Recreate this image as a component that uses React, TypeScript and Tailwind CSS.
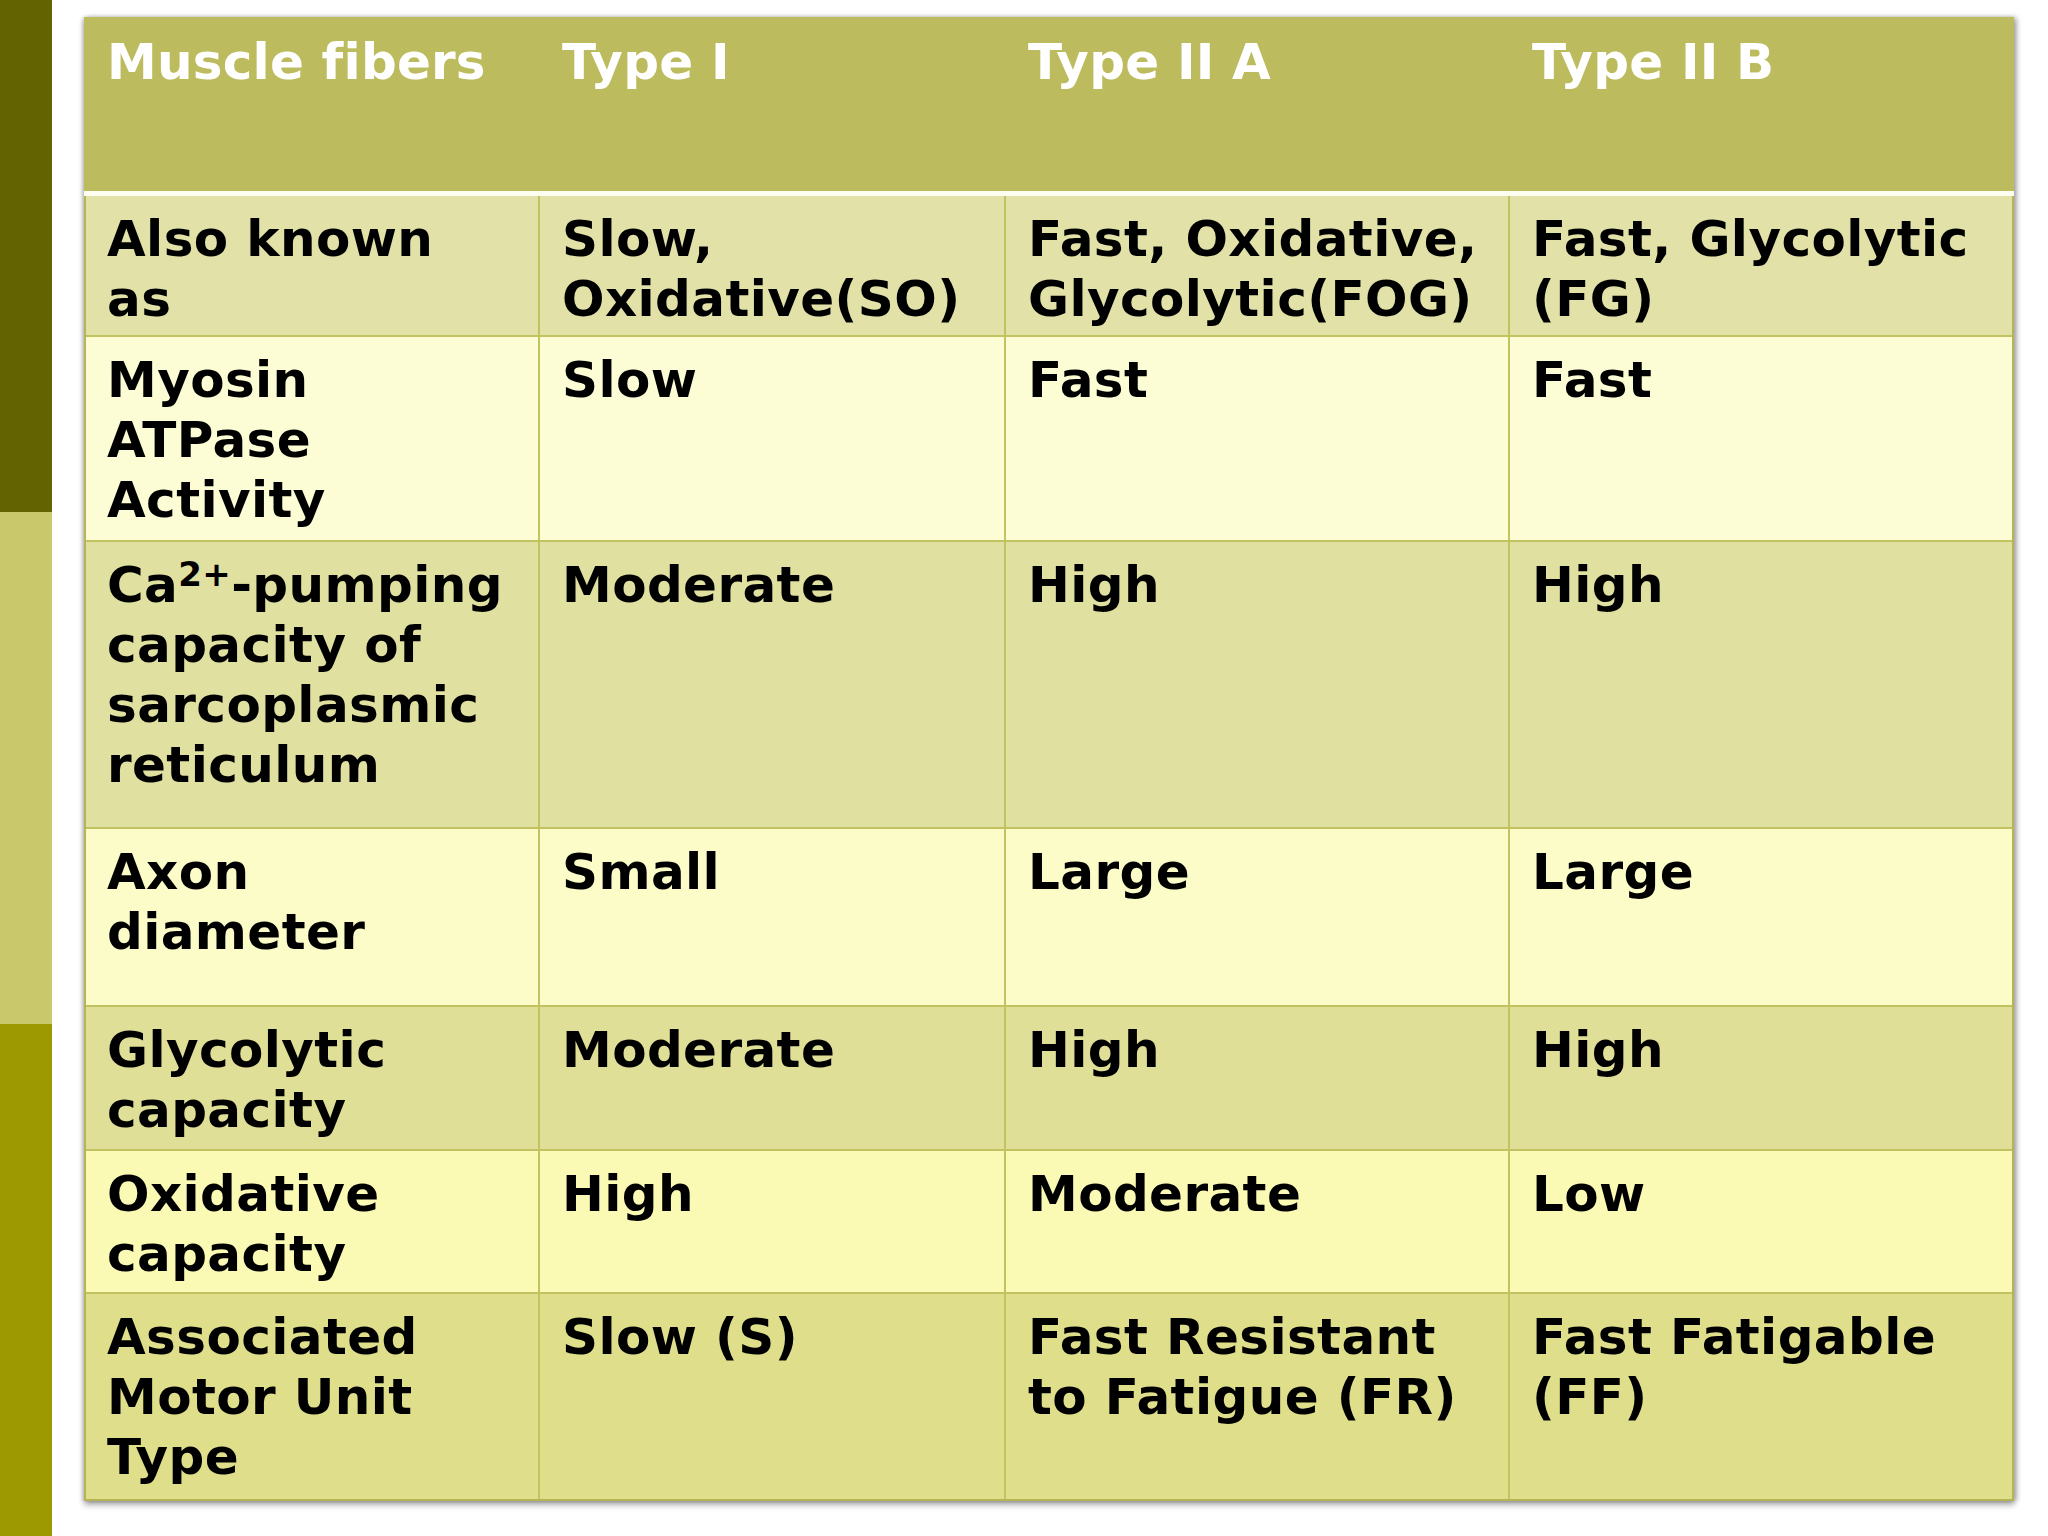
import React from 'react';

type Row = {
    height: string;
    bg: string;
    cells: React.ReactNode[];
};

const rows: Row[] = [
    {
        height: 'h-[141px]',
        bg: 'bg-[#e1e1a8]',
        cells: [
            <>Also known<br />as</>,
            <>Slow,<br />Oxidative(SO)</>,
            <>Fast, Oxidative,<br />Glycolytic(FOG)</>,
            <>Fast, Glycolytic<br />(FG)</>,
        ],
    },
    {
        height: 'h-[205px]',
        bg: 'bg-[#fdfdd5]',
        cells: [<>Myosin<br />ATPase<br />Activity</>, 'Slow', 'Fast', 'Fast'],
    },
    {
        height: 'h-[287px]',
        bg: 'bg-[#e0e0a0]',
        cells: [
            <>Ca<sup className="text-[34px] -top-[16px]">2+</sup>-pumping<br />capacity of<br />sarcoplasmic<br />reticulum</>,
            'Moderate',
            'High',
            'High',
        ],
    },
    {
        height: 'h-[178px]',
        bg: 'bg-[#fcfcc8]',
        cells: [<>Axon<br />diameter</>, 'Small', 'Large', 'Large'],
    },
    {
        height: 'h-[144px]',
        bg: 'bg-[#e0df97]',
        cells: [<>Glycolytic<br />capacity</>, 'Moderate', 'High', 'High'],
    },
    {
        height: 'h-[143px]',
        bg: 'bg-[#fafab5]',
        cells: [<>Oxidative<br />capacity</>, 'High', 'Moderate', 'Low'],
    },
    {
        height: 'h-[205px]',
        bg: 'bg-[#dfdf8b]',
        cells: [
            <>Associated<br />Motor Unit<br />Type</>,
            'Slow (S)',
            <>Fast Resistant<br />to Fatigue (FR)</>,
            <>Fast Fatigable<br />(FF)</>,
        ],
    },
];

const headers = ['Muscle fibers', 'Type I', 'Type II A', 'Type II B'];

const cols = 'grid grid-cols-[454px_466px_504px_506px]';

export default function App() {
    return (
        <div className="flex min-h-screen bg-white font-['DejaVu_Sans',sans-serif] font-bold">
            {/* slide accent bar */}
            <div className="flex w-[52px] flex-col">
                <div className="h-[512px] bg-[#636301]" />
                <div className="h-[512px] bg-[#c9c96b]" />
                <div className="h-[512px] bg-[#9c9a00]" />
            </div>

            <div className="pl-[32px] pt-[17px]">
                <div className="w-[1930px] shadow-[0_4px_6px_rgba(0,0,0,0.3),3px_0_5px_rgba(0,0,0,0.25),-2px_0_3px_rgba(0,0,0,0.12)]">
                    <div className={`${cols} h-[174px] bg-[#bcbb5e] text-white`}>
                        {headers.map((h, i) => (
                            <div
                                key={h}
                                className={`pt-[15px] text-[50px] leading-[60px] tracking-[0.2px] whitespace-nowrap ${i === 0 ? 'pl-[23px]' : 'pl-[24px]'}`}
                            >
                                {h}
                            </div>
                        ))}
                    </div>
                    <div className="h-[5px] bg-[#fdfdf0]" />

                    <div className="border-x-2 border-b-2 border-[#b5b555]">
                        {rows.map((row, r) => (
                            <div
                                key={r}
                                className={`${cols} ${row.height} ${row.bg} ${r < rows.length - 1 ? 'border-b-2 border-[#c2c260]' : ''}`}
                            >
                                {row.cells.map((c, i) => (
                                    <div
                                        key={i}
                                        className={`pt-[13px] text-[50px] leading-[60px] tracking-[0.4px] whitespace-nowrap text-black ${i < 3 ? 'border-r-2 border-[#c2c260]' : ''} ${i === 0 ? 'pl-[21px]' : 'pl-[22px]'}`}
                                    >
                                        {c}
                                    </div>
                                ))}
                            </div>
                        ))}
                    </div>
                </div>
            </div>
        </div>
    );
}
